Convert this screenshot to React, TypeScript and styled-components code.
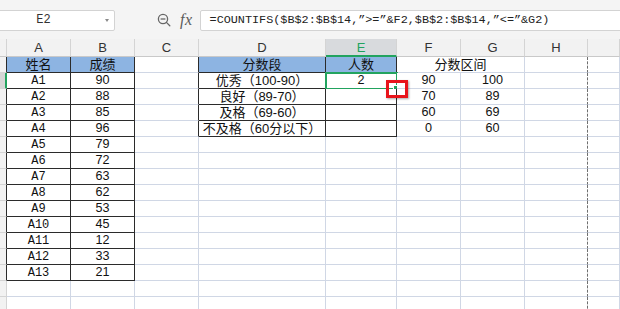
import React from 'react';
import styled, { createGlobalStyle } from 'styled-components';

const GlobalStyle = createGlobalStyle`
  html, body { margin: 0; padding: 0; background: #fff; }
  body {
    width: 620px; height: 309px; overflow: hidden;
    font-family: "Liberation Sans", "Noto Sans CJK SC", sans-serif;
  }
`;

const GRID = '#d0d7e5';
const DARK = '#2b2b2b';
const HEAD_LINE = '#d4d4d4';
const GREEN = '#22a35f';
const BLUE = '#8db4e2';

const Page = styled.div`
  width: 620px;
  height: 309px;
  overflow: hidden;
  display: flex;
  flex-direction: column;
  background: #fff;
`;

const Toolbar = styled.div`
  height: 39px;
  flex: none;
  box-sizing: border-box;
  padding-top: 1px;
  background: #f4f4f4;
  display: flex;
  align-items: center;
`;

const NameBox = styled.div`
  margin-left: -25px;
  width: 140px;
  height: 21px;
  box-sizing: border-box;
  border: 1px solid #d3d3d3;
  border-radius: 2px;
  background: #fff;
  display: flex;
  align-items: center;
`;

const NameText = styled.span`
  flex: 1;
  text-align: center;
  padding-left: 6px;
  font-family: "Liberation Mono", monospace;
  font-size: 12px;
  color: #333;
`;

const Caret = styled.span`
  width: 0;
  height: 0;
  margin-right: 5px;
  border-left: 2.5px solid transparent;
  border-right: 2.5px solid transparent;
  border-top: 3px solid #8a8a8a;
`;

const IconSlot = styled.span`
  margin-left: 42px;
  width: 14px;
  height: 14px;
  display: flex;
`;

const Fx = styled.span`
  margin-left: 9px;
  font-family: "Liberation Serif", serif;
  font-style: italic;
  font-size: 16px;
  color: #5a5a5a;
  letter-spacing: 0.5px;
`;

const FormulaBox = styled.div`
  margin-left: 7px;
  margin-right: -10px;
  flex: 1;
  height: 21px;
  box-sizing: border-box;
  border: 1px solid #d3d3d3;
  border-radius: 2px;
  background: #fff;
  display: flex;
  align-items: center;
  padding-left: 9px;
  font-family: "Liberation Mono", monospace;
  font-size: 11.8px;
  color: #222;
  white-space: nowrap;
  overflow: hidden;
`;

const Sheet = styled.div`
  display: grid;
  grid-template-columns: 7px 64px 64px 64px 127px 71px 64px 64px 63px 32px;
  grid-template-rows: 18px repeat(16, 16px);
`;

const HeadCell = styled.div<{ $active?: boolean }>`
  box-sizing: border-box;
  background: ${p => (p.$active ? '#d8dadd' : '#f2f2f2')};
  border-right: 1px solid ${HEAD_LINE};
  border-bottom: ${p => (p.$active ? `2px solid ${GREEN}` : `1px solid #c9c9c9`)};
  display: flex;
  align-items: center;
  justify-content: center;
  font-size: 13px;
  color: ${p => (p.$active ? GREEN : '#333')};
`;

const RowHead = styled.div<{ $active?: boolean; $rb: string }>`
  box-sizing: border-box;
  background: ${p => (p.$active ? '#d6d6d6' : '#f2f2f2')};
  border-bottom: 1px solid ${HEAD_LINE};
  border-right: ${p => (p.$active ? `2px solid ${GREEN}` : `1px solid ${p.$rb}`)};
`;

const Cell = styled.div<{
  $rb: string;
  $bb: string;
  $dash?: boolean;
  $bg?: string;
  $mono?: boolean;
  $cjk?: boolean;
  $span?: number;
}>`
  position: relative;
  box-sizing: border-box;
  grid-column: span ${p => p.$span ?? 1};
  background: ${p => p.$bg ?? '#fff'};
  border-right: 1px ${p => (p.$dash ? 'dashed' : 'solid')} ${p => p.$rb};
  border-bottom: 1px solid ${p => p.$bb};
  display: flex;
  align-items: center;
  justify-content: center;
  white-space: nowrap;
  font-family: ${p =>
    p.$mono
      ? '"Liberation Mono", "Noto Sans CJK SC", monospace'
      : '"Liberation Sans", "Noto Sans CJK SC", sans-serif'};
  font-size: ${p => (p.$mono ? '12px' : p.$cjk ? '13px' : '12.6px')};
  color: #111;
  line-height: 1;
`;

const Selection = styled.span`
  position: absolute;
  top: -1px;
  left: -1px;
  right: -2px;
  bottom: -2px;
  border: 2px solid ${GREEN};
  pointer-events: none;
`;

const FillHandle = styled.span`
  position: absolute;
  right: -4px;
  bottom: -4px;
  width: 5px;
  height: 5px;
  background: ${GREEN};
  border: 1px solid #fff;
`;

const Callout = styled.span`
  position: absolute;
  left: 60px;
  top: 7px;
  width: 22px;
  height: 18px;
  box-sizing: border-box;
  border: 3px solid #e8141b;
  box-shadow: 1px 1px 2px rgba(0, 0, 0, 0.35);
  z-index: 3;
`;

const COLS = ['A', 'B', 'C', 'D', 'E', 'F', 'G', 'H', ''];
const ROWS = 16;

const names = ['姓名', ...Array.from({ length: 13 }, (_, i) => `A${i + 1}`)];
const scores = ['成绩', '90', '88', '85', '96', '79', '72', '63', '62', '53', '45', '12', '33', '21'];
const bands = ['分数段', '优秀（100-90）', '良好（89-70）', '及格（69-60）', '不及格（60分以下）'];
const counts = ['人数', '2'];
const fVals = ['', '90', '70', '60', '0'];
const gVals = ['', '100', '89', '69', '60'];

const inTable = (r: number, c: number) =>
  ((c === 1 || c === 2) && r >= 1 && r <= 14) || ((c === 4 || c === 5) && r >= 1 && r <= 5);

function cellText(r: number, c: number): string {
  const i = r - 1;
  if (c === 1) return names[i] ?? '';
  if (c === 2) return scores[i] ?? '';
  if (c === 4) return bands[i] ?? '';
  if (c === 5) return counts[i] ?? '';
  if (c === 6) return fVals[i] ?? '';
  if (c === 7) return gVals[i] ?? '';
  return '';
}

const MagnifierMinus = () => (
  <svg width="14" height="14" viewBox="0 0 14 14" fill="none" stroke="#666" strokeWidth="1.3">
    <circle cx="6" cy="6" r="4.6" />
    <line x1="3.6" y1="6" x2="8.4" y2="6" />
    <line x1="9.4" y1="9.4" x2="12.8" y2="12.8" strokeLinecap="round" />
  </svg>
);

export default function App() {
  const cells: React.ReactNode[] = [];

  cells.push(<HeadCell key="corner" />);
  COLS.forEach((l, i) => cells.push(<HeadCell key={`h${i}`} $active={l === 'E'}>{l}</HeadCell>));

  for (let r = 1; r <= ROWS; r++) {
    cells.push(<RowHead key={`rh${r}`} $active={r === 2} $rb={inTable(r, 1) ? DARK : HEAD_LINE} />);
    for (let c = 1; c <= 9; c++) {
      if (r === 1 && c === 7) continue; // merged into F1
      const merged = r === 1 && c === 6;
      const rb = inTable(r, c) || inTable(r, c + 1) ? DARK : c === 8 ? '#6f6f6f' : GRID;
      const bb = inTable(r, c) || inTable(r + 1, c) ? DARK : GRID;
      const isHeader = r === 1 && inTable(r, c);
      const text = merged ? '分数区间' : cellText(r, c);
      const selected = r === 2 && c === 5;
      cells.push(
        <Cell
          key={`c${r}-${c}`}
          $rb={rb}
          $bb={bb}
          $dash={c === 8}
          $bg={isHeader ? BLUE : undefined}
          $mono={c === 1 && r > 1}
          $cjk={/[\u4e00-\u9fff]/.test(text)}
          $span={merged ? 2 : 1}
        >
          {text}
          {selected && (
            <>
              <Selection />
              <FillHandle />
              <Callout />
            </>
          )}
        </Cell>
      );
    }
  }

  return (
    <Page>
      <GlobalStyle />
      <Toolbar>
        <NameBox>
          <NameText>E2</NameText>
          <Caret />
        </NameBox>
        <IconSlot>
          <MagnifierMinus />
        </IconSlot>
        <Fx>fx</Fx>
        <FormulaBox>=COUNTIFS($B$2:$B$14,”&gt;=”&amp;F2,$B$2:$B$14,”&lt;=”&amp;G2)</FormulaBox>
      </Toolbar>
      <Sheet>{cells}</Sheet>
    </Page>
  );
}
